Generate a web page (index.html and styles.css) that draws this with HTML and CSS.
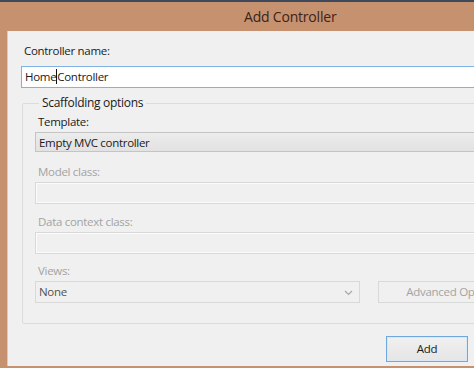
FILE: index.html
```html
<!DOCTYPE html>
<html lang="en">
<head>
<meta charset="utf-8">
<title>Add Controller</title>
<link rel="stylesheet" href="styles.css">
</head>
<body>
  <div class="topline"></div>
  <div class="titlebar">Add Controller</div>

  <div class="dialog">
    <div class="label">Controller name:</div>
    <div class="textbox focused">Home<span class="caret"></span>Controller</div>

    <fieldset class="group">
      <legend>Scaffolding options</legend>

      <div class="label first">Template:</div>
      <div class="combo">Empty MVC controller</div>

      <div class="label disabled after-combo">Model class:</div>
      <div class="textbox off"></div>

      <div class="label disabled">Data context class:</div>
      <div class="textbox off"></div>

      <div class="label disabled views">Views:</div>
      <div class="views-row">
        <div class="combo off">None
          <svg class="chev" width="9" height="6" viewBox="0 0 9 6"><path d="M1 1 L4.5 4.5 L8 1" fill="none" stroke="#a8a8a8" stroke-width="1.2"/></svg>
        </div>
        <div class="btn off wide">Advanced Options...</div>
      </div>
    </fieldset>

    <div class="footer">
      <div class="btn default">Add</div>
    </div>
  </div>
</body>
</html>
```

FILE: styles.css
```css
html, body {
  margin: 0;
  padding: 0;
  height: 100%;
  overflow: hidden;
}
body {
  background: #c6916f;
  font-family: "Open Sans", "Noto Sans", sans-serif;
  font-size: 11.5px;
  letter-spacing: -0.3px;
  color: #1a1a1a;
}

.topline {
  height: 2px;
  background: #3e4a5c;
}

.titlebar {
  height: 29px;
  line-height: 29px;
  padding-left: 244px;
  font-size: 14px;
  letter-spacing: -0.2px;
  color: #3b2418;
}

.dialog {
  margin-left: 7px;
  width: 640px;
  height: 335px;
  border-left: 1px solid #e2c7b4;
  background: #f0f0f0;
  padding: 12px 0 0 13px;
  box-sizing: border-box;
}

.label {
  height: 16px;
  line-height: 16px;
  padding-left: 3px;
}
.label.disabled {
  color: #a3a3a3;
}

.textbox {
  height: 22px;
  line-height: 20px;
  box-sizing: border-box;
  padding-left: 3px;
  border: 1px solid #d9d9d9;
  background: #f0f0f0;
  box-shadow: inset 0 0 0 1px #fbfbfb;
}
.textbox.focused {
  margin-top: 7px;
  background: #fff;
  border-color: #7fb3e6;
  box-shadow: none;
}
.caret {
  display: inline-block;
  width: 1px;
  height: 15px;
  vertical-align: -3px;
  background: #111;
}

.group {
  margin: 7px 0 0 1px;
  padding: 3px 0 0 12px;
  height: 229px;
  box-sizing: border-box;
  border: 1px solid #dcdcdc;
  border-radius: 2px;
}
.group legend {
  margin-left: 4px;
  padding: 0 3px 0 3px;
  font-size: 12px;
  line-height: 16px;
}

.group .label {
  margin-top: 10px;
  margin-bottom: 2px;
}
.group .label.first {
  margin-top: 0;
}
.group .label.after-combo {
  margin-top: 12px;
}
.group .label.views {
  margin-top: 9px;
}

.combo {
  position: relative;
  height: 20px;
  line-height: 19px;
  box-sizing: border-box;
  padding-left: 3px;
  border: 1px solid #c4c4c4;
  background: linear-gradient(#ececec, #e2e2e2);
}
.combo.off {
  height: 22px;
  line-height: 20px;
  width: 325px;
  border-color: #d9d9d9;
  background: #f0f0f0;
  color: #505050;
}
.chev {
  position: absolute;
  right: 6px;
  top: 8px;
}

.views-row {
  display: flex;
  gap: 18px;
}

.btn {
  height: 22px;
  line-height: 20px;
  box-sizing: border-box;
  width: 110px;
  text-align: center;
  white-space: nowrap;
  border: 1px solid #d9d9d9;
  background: #f0f0f0;
}
.btn.off {
  color: #a3a3a3;
}
.btn.wide {
  flex: none;
  width: 158px;
}

.footer {
  display: flex;
  margin: 12px 0 0 365px;
}
.footer .btn {
  height: 26px;
  width: 82px;
  line-height: 24px;
  border: 1px solid #acacac;
  background: linear-gradient(#f0f0f0, #e5e5e5);
}
.footer .btn.default {
  border-color: #71a8dc;
  box-shadow: inset 0 0 0 1px #d8e8f6;
}
```
